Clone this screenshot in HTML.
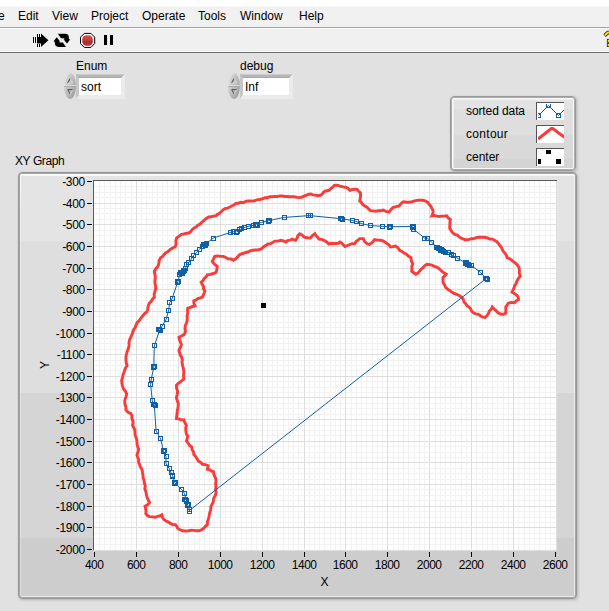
<!DOCTYPE html>
<html><head><meta charset="utf-8"><title>XY Graph</title>
<style>
html,body{margin:0;padding:0;background:#e1e1e1}
body{width:609px;height:611px;overflow:hidden;background:#e1e1e1;position:relative;font-family:"Liberation Sans",sans-serif;font-size:12px;color:#000}
.abs{position:absolute}
.t{position:absolute;white-space:nowrap;line-height:14px}
.tk{font-family:"Liberation Sans",sans-serif;font-size:12px;fill:#000}
#menubar{left:0;top:0;width:609px;height:27px;background:linear-gradient(180deg,#fff 0,#fff 6px,#f1f1f1 7px,#f1f1f1 100%)}
#toolbar{left:0;top:27px;width:609px;height:26px;background:#f0f0f0}
</style></head><body>
<div class="abs" id="menubar"></div>
<div class="abs" id="toolbar"></div>
<div class="abs" style="left:0;top:27px;width:609px;height:1px;background:#a0a0a0"></div>
<div class="abs" style="left:0;top:28px;width:609px;height:1px;background:#fff"></div>
<div class="abs" style="left:0;top:51px;width:609px;height:1px;background:#fff"></div>
<div class="abs" style="left:0;top:52px;width:609px;height:1px;background:#6e6e6e"></div>
<span class="t" style="left:-2px;top:9px">e</span>
<span class="t" style="left:18px;top:9px">Edit</span>
<span class="t" style="left:52px;top:9px">View</span>
<span class="t" style="left:91px;top:9px">Project</span>
<span class="t" style="left:142px;top:9px">Operate</span>
<span class="t" style="left:198px;top:9px">Tools</span>
<span class="t" style="left:240px;top:9px">Window</span>
<span class="t" style="left:299px;top:9px">Help</span>

<!-- toolbar icons -->
<svg class="abs" style="left:0;top:28px" width="609" height="24" viewBox="0 28 609 24">
 <!-- run arrow -->
 <path d="M37 37 H41 V33.6 L48.4 40.3 L41 47 V43.4 H37 Z" fill="#000"/>
 <g shape-rendering="crispEdges" fill="#000"><rect x="33" y="37" width="1" height="6"/><rect x="35" y="37" width="1" height="6"/>
 <rect x="37" y="34" width="1" height="3"/><rect x="39" y="34" width="1" height="3"/><rect x="37" y="44" width="1" height="3"/><rect x="39" y="44" width="1" height="3"/></g>
 <!-- run continuously -->
 <g id="rc"><path d="M57.4 33.8 H65.2 Q68.9 34 68.9 37.6 V39.2 H70.3 L67 43.5 L63.5 39.2 H64.7 Q64.7 38.2 63.4 38.2 H60.5 Z" fill="#000"/></g>
 <use href="#rc" transform="rotate(180 61.85 40.35)"/>
 <path d="M57.4 33.6 L66.4 47" stroke="#f0f0f0" stroke-width="0.8"/>
 <!-- abort -->
 <path d="M84.3 33.4h6.6l3.8 3.8v6.4l-3.8 3.8h-6.6l-3.8 -3.8v-6.4z" fill="#fafafa" stroke="#000" stroke-width="1"/>
 <linearGradient id="rg" x1="0" y1="0" x2="0" y2="1"><stop offset="0" stop-color="#d45050"/><stop offset="0.5" stop-color="#c23a3a"/><stop offset="0.52" stop-color="#b02c2c"/><stop offset="1" stop-color="#b83232"/></linearGradient>
 <rect x="82.2" y="35.2" width="10.6" height="10.6" rx="4.2" fill="url(#rg)"/>
 <!-- pause -->
 <rect x="104" y="35" width="3" height="10" fill="#000"/>
 <rect x="110" y="35" width="3" height="10" fill="#000"/>
 <!-- help ? -->
 <path d="M604.6 35.6 l3.2 -3 h2" fill="none" stroke="#222" stroke-width="3.6"/>
 <path d="M604.9 35.3 l3 -2.8 h2" fill="none" stroke="#f0e800" stroke-width="2"/>
 <rect x="607.3" y="39.3" width="3" height="3.2" fill="#f0e800" stroke="#222" stroke-width="0.8"/>
 <rect x="607.3" y="43.6" width="3" height="3" fill="#f0e800" stroke="#222" stroke-width="0.8"/>
</svg>

<!-- Enum control -->
<span class="t" style="left:76px;top:59px">Enum</span>
<div class="abs box" style="left:76px;top:74px;width:49px;height:25px"><div class="in" ></div></div>
<span class="t" style="left:81px;top:80px">sort</span>
<!-- debug control -->
<span class="t" style="left:240px;top:59px">debug</span>
<div class="abs box" style="left:240px;top:74px;width:53px;height:25px"><div class="in"></div></div>
<span class="t" style="left:245px;top:80px">Inf</span>
<svg class="abs" style="left:0;top:70px" width="300" height="32" viewBox="0 70 300 32">
 <defs>
 <linearGradient id="sg" x1="0" y1="0.100" x2="1" y2="0.900"><stop offset="0" stop-color="#dedede"/><stop offset="0.4" stop-color="#c4c4c4"/><stop offset="1" stop-color="#9a9a9a"/></linearGradient>
 <g id="spin">
  <ellipse cx="6" cy="13" rx="6" ry="13" fill="url(#sg)"/>
  <path d="M6 0.500 C2.400 2.500 0.500 8 0.500 13" fill="none" stroke="#e4e4e4" stroke-width="1"/>
  <rect x="0.200" y="12.100" width="11.600" height="1" fill="#e2e2e2"/>
  <rect x="0.200" y="13.100" width="11.600" height="0.800" fill="#a4a4a4"/>
  <path d="M3.600 10 L6.200 5.600" stroke="#555" stroke-width="1.100"/><path d="M6.200 5.600 L8.600 10 H3.600" fill="none" stroke="#d8d8d8" stroke-width="0.900"/>
  <path d="M3.600 16.600 H8.600" stroke="#555" stroke-width="1.100"/><path d="M3.800 16.800 L6.100 21" stroke="#555" stroke-width="1"/><path d="M8.600 16.800 L6.300 21" fill="none" stroke="#d8d8d8" stroke-width="0.900"/>
 </g></defs>
 <use href="#spin" x="64" y="73"/>
 <use href="#spin" x="228" y="73"/>
</svg>
<style>
.box{background:#fff;border-style:solid;border-width:4px 4px 4px 3px;border-color:#b6b6b6 #ebebeb #ebebeb #c6c6c6;box-sizing:border-box}
.box:before{content:"";position:absolute;left:-2px;right:-3px;top:-4px;height:1px;background:#cacaca}
.box:after{content:"";position:absolute;left:0;right:0;top:-1px;height:1px;background:#a8a8a8}
.box .in{width:100%;height:100%;background:#fff}
</style>

<!-- legend -->
<div class="abs" style="left:450px;top:96px;width:126px;height:75px;border:1px solid #9a9a9a;border-radius:4px;box-sizing:border-box;background:linear-gradient(180deg,#e3e3e3 0,#e3e3e3 12px,#dedede 12px,#dedede 38px,#d9d9d9 38px,#d9d9d9 62px,#d4d4d4 62px);box-shadow:inset 0 0 0 1px #acacac,inset 0 0 0 2px #f8f8f8,inset 1px 1px 0 2px rgba(255,255,255,.45),1px 1px 3px rgba(0,0,0,.2)"></div>
<span class="t" style="left:466px;top:104px;letter-spacing:-0.1px">sorted data</span>
<span class="t" style="left:466px;top:127px;letter-spacing:0.3px">contour</span>
<span class="t" style="left:466px;top:150px">center</span>
<svg class="abs" style="left:530px;top:96px" width="50" height="76" viewBox="530 96 50 76">
 <g shape-rendering="crispEdges">
 <rect x="536" y="102" width="28" height="18" fill="#fff"/><rect x="536" y="102" width="28" height="1" fill="#555"/><rect x="536" y="102" width="1" height="18" fill="#555"/>
 <rect x="536" y="125" width="28" height="18" fill="#fff"/><rect x="536" y="125" width="28" height="1" fill="#555"/><rect x="536" y="125" width="1" height="18" fill="#555"/>
 <rect x="536" y="148" width="28" height="18" fill="#fff"/><rect x="536" y="148" width="28" height="1" fill="#555"/><rect x="536" y="148" width="1" height="18" fill="#555"/>
 <rect x="546" y="150" width="5" height="4" fill="#000"/><rect x="538" y="159" width="3" height="5" fill="#000"/><rect x="556" y="159" width="5" height="5" fill="#000"/>
 </g>
 <clipPath id="c1"><rect x="538" y="104" width="26" height="16"/></clipPath>
 <g clip-path="url(#c1)" fill="none" stroke="#0f5fa6" stroke-width="1">
  <path d="M538.5 115.5 L548.5 105.5 L558.5 115.5 L568.5 105.5"/>
  <rect x="536.5" y="113.5" width="4" height="4"/><rect x="546.5" y="103.500" width="4" height="4"/><rect x="556.5" y="113.5" width="4" height="4"/>
 </g>
 <clipPath id="c2"><rect x="538" y="127" width="26" height="16"/></clipPath>
 <path clip-path="url(#c2)" d="M538 139 L552 128 L565 137.5" fill="none" stroke="#fb3a3a" stroke-width="3"/>
</svg>

<!-- graph -->
<span class="t" style="left:15px;top:154px;letter-spacing:-0.4px">XY Graph</span>
<div class="abs" id="frame" style="left:18px;top:172px;width:559px;height:427px;box-sizing:border-box;border:1px solid #989898;border-radius:4px;background:linear-gradient(180deg,#e4e4e4 0,#e4e4e4 68px,#dedede 68px,#dedede 220px,#d5d5d5 220px,#d5d5d5 365px,#cdcdcd 365px);box-shadow:inset 0 0 0 1px #a4a4a4,inset 0 0 0 2px rgba(255,255,255,.3),1px 1px 3px rgba(0,0,0,.2)"></div>
<div class="abs" style="left:574px;top:177px;width:1px;height:418px;background:rgba(255,255,255,.4)"></div><div class="abs" style="left:22px;top:596px;width:552px;height:1px;background:rgba(255,255,255,.45)"></div>
<div class="abs" style="left:21px;top:174px;width:553px;height:1px;background:#fff"></div><div class="abs" style="left:20px;top:175px;width:555px;height:1px;background:rgba(255,255,255,.55)"></div><div class="abs" style="left:20px;top:176px;width:1px;height:40px;background:linear-gradient(180deg,rgba(255,255,255,.8),rgba(255,255,255,0))"></div>
<svg class="abs" style="left:0;top:0" width="609" height="611" viewBox="0 0 609 611">
<g shape-rendering="crispEdges">
<rect x="94" y="181" width="462" height="369" fill="#fff"/>
<rect x="99" y="181" width="1" height="369" fill="#f2f2f2"/>
<rect x="104" y="181" width="1" height="369" fill="#f2f2f2"/>
<rect x="110" y="181" width="1" height="369" fill="#f2f2f2"/>
<rect x="115" y="181" width="1" height="369" fill="#f2f2f2"/>
<rect x="120" y="181" width="1" height="369" fill="#f2f2f2"/>
<rect x="125" y="181" width="1" height="369" fill="#f2f2f2"/>
<rect x="131" y="181" width="1" height="369" fill="#f2f2f2"/>
<rect x="141" y="181" width="1" height="369" fill="#f2f2f2"/>
<rect x="146" y="181" width="1" height="369" fill="#f2f2f2"/>
<rect x="152" y="181" width="1" height="369" fill="#f2f2f2"/>
<rect x="157" y="181" width="1" height="369" fill="#f2f2f2"/>
<rect x="162" y="181" width="1" height="369" fill="#f2f2f2"/>
<rect x="167" y="181" width="1" height="369" fill="#f2f2f2"/>
<rect x="173" y="181" width="1" height="369" fill="#f2f2f2"/>
<rect x="183" y="181" width="1" height="369" fill="#f2f2f2"/>
<rect x="188" y="181" width="1" height="369" fill="#f2f2f2"/>
<rect x="194" y="181" width="1" height="369" fill="#f2f2f2"/>
<rect x="199" y="181" width="1" height="369" fill="#f2f2f2"/>
<rect x="204" y="181" width="1" height="369" fill="#f2f2f2"/>
<rect x="209" y="181" width="1" height="369" fill="#f2f2f2"/>
<rect x="214" y="181" width="1" height="369" fill="#f2f2f2"/>
<rect x="225" y="181" width="1" height="369" fill="#f2f2f2"/>
<rect x="230" y="181" width="1" height="369" fill="#f2f2f2"/>
<rect x="235" y="181" width="1" height="369" fill="#f2f2f2"/>
<rect x="241" y="181" width="1" height="369" fill="#f2f2f2"/>
<rect x="246" y="181" width="1" height="369" fill="#f2f2f2"/>
<rect x="251" y="181" width="1" height="369" fill="#f2f2f2"/>
<rect x="256" y="181" width="1" height="369" fill="#f2f2f2"/>
<rect x="267" y="181" width="1" height="369" fill="#f2f2f2"/>
<rect x="272" y="181" width="1" height="369" fill="#f2f2f2"/>
<rect x="277" y="181" width="1" height="369" fill="#f2f2f2"/>
<rect x="283" y="181" width="1" height="369" fill="#f2f2f2"/>
<rect x="288" y="181" width="1" height="369" fill="#f2f2f2"/>
<rect x="293" y="181" width="1" height="369" fill="#f2f2f2"/>
<rect x="298" y="181" width="1" height="369" fill="#f2f2f2"/>
<rect x="309" y="181" width="1" height="369" fill="#f2f2f2"/>
<rect x="314" y="181" width="1" height="369" fill="#f2f2f2"/>
<rect x="319" y="181" width="1" height="369" fill="#f2f2f2"/>
<rect x="324" y="181" width="1" height="369" fill="#f2f2f2"/>
<rect x="330" y="181" width="1" height="369" fill="#f2f2f2"/>
<rect x="335" y="181" width="1" height="369" fill="#f2f2f2"/>
<rect x="340" y="181" width="1" height="369" fill="#f2f2f2"/>
<rect x="351" y="181" width="1" height="369" fill="#f2f2f2"/>
<rect x="356" y="181" width="1" height="369" fill="#f2f2f2"/>
<rect x="361" y="181" width="1" height="369" fill="#f2f2f2"/>
<rect x="366" y="181" width="1" height="369" fill="#f2f2f2"/>
<rect x="372" y="181" width="1" height="369" fill="#f2f2f2"/>
<rect x="377" y="181" width="1" height="369" fill="#f2f2f2"/>
<rect x="382" y="181" width="1" height="369" fill="#f2f2f2"/>
<rect x="393" y="181" width="1" height="369" fill="#f2f2f2"/>
<rect x="398" y="181" width="1" height="369" fill="#f2f2f2"/>
<rect x="403" y="181" width="1" height="369" fill="#f2f2f2"/>
<rect x="408" y="181" width="1" height="369" fill="#f2f2f2"/>
<rect x="414" y="181" width="1" height="369" fill="#f2f2f2"/>
<rect x="419" y="181" width="1" height="369" fill="#f2f2f2"/>
<rect x="424" y="181" width="1" height="369" fill="#f2f2f2"/>
<rect x="435" y="181" width="1" height="369" fill="#f2f2f2"/>
<rect x="440" y="181" width="1" height="369" fill="#f2f2f2"/>
<rect x="445" y="181" width="1" height="369" fill="#f2f2f2"/>
<rect x="450" y="181" width="1" height="369" fill="#f2f2f2"/>
<rect x="455" y="181" width="1" height="369" fill="#f2f2f2"/>
<rect x="461" y="181" width="1" height="369" fill="#f2f2f2"/>
<rect x="466" y="181" width="1" height="369" fill="#f2f2f2"/>
<rect x="476" y="181" width="1" height="369" fill="#f2f2f2"/>
<rect x="482" y="181" width="1" height="369" fill="#f2f2f2"/>
<rect x="487" y="181" width="1" height="369" fill="#f2f2f2"/>
<rect x="492" y="181" width="1" height="369" fill="#f2f2f2"/>
<rect x="497" y="181" width="1" height="369" fill="#f2f2f2"/>
<rect x="503" y="181" width="1" height="369" fill="#f2f2f2"/>
<rect x="508" y="181" width="1" height="369" fill="#f2f2f2"/>
<rect x="518" y="181" width="1" height="369" fill="#f2f2f2"/>
<rect x="524" y="181" width="1" height="369" fill="#f2f2f2"/>
<rect x="529" y="181" width="1" height="369" fill="#f2f2f2"/>
<rect x="534" y="181" width="1" height="369" fill="#f2f2f2"/>
<rect x="539" y="181" width="1" height="369" fill="#f2f2f2"/>
<rect x="545" y="181" width="1" height="369" fill="#f2f2f2"/>
<rect x="550" y="181" width="1" height="369" fill="#f2f2f2"/>
<rect x="94" y="186" width="462" height="1" fill="#f2f2f2"/>
<rect x="94" y="192" width="462" height="1" fill="#f2f2f2"/>
<rect x="94" y="197" width="462" height="1" fill="#f2f2f2"/>
<rect x="94" y="208" width="462" height="1" fill="#f2f2f2"/>
<rect x="94" y="213" width="462" height="1" fill="#f2f2f2"/>
<rect x="94" y="219" width="462" height="1" fill="#f2f2f2"/>
<rect x="94" y="230" width="462" height="1" fill="#f2f2f2"/>
<rect x="94" y="235" width="462" height="1" fill="#f2f2f2"/>
<rect x="94" y="241" width="462" height="1" fill="#f2f2f2"/>
<rect x="94" y="251" width="462" height="1" fill="#f2f2f2"/>
<rect x="94" y="257" width="462" height="1" fill="#f2f2f2"/>
<rect x="94" y="262" width="462" height="1" fill="#f2f2f2"/>
<rect x="94" y="273" width="462" height="1" fill="#f2f2f2"/>
<rect x="94" y="278" width="462" height="1" fill="#f2f2f2"/>
<rect x="94" y="284" width="462" height="1" fill="#f2f2f2"/>
<rect x="94" y="295" width="462" height="1" fill="#f2f2f2"/>
<rect x="94" y="300" width="462" height="1" fill="#f2f2f2"/>
<rect x="94" y="305" width="462" height="1" fill="#f2f2f2"/>
<rect x="94" y="316" width="462" height="1" fill="#f2f2f2"/>
<rect x="94" y="322" width="462" height="1" fill="#f2f2f2"/>
<rect x="94" y="327" width="462" height="1" fill="#f2f2f2"/>
<rect x="94" y="338" width="462" height="1" fill="#f2f2f2"/>
<rect x="94" y="343" width="462" height="1" fill="#f2f2f2"/>
<rect x="94" y="349" width="462" height="1" fill="#f2f2f2"/>
<rect x="94" y="360" width="462" height="1" fill="#f2f2f2"/>
<rect x="94" y="365" width="462" height="1" fill="#f2f2f2"/>
<rect x="94" y="370" width="462" height="1" fill="#f2f2f2"/>
<rect x="94" y="381" width="462" height="1" fill="#f2f2f2"/>
<rect x="94" y="387" width="462" height="1" fill="#f2f2f2"/>
<rect x="94" y="392" width="462" height="1" fill="#f2f2f2"/>
<rect x="94" y="403" width="462" height="1" fill="#f2f2f2"/>
<rect x="94" y="408" width="462" height="1" fill="#f2f2f2"/>
<rect x="94" y="414" width="462" height="1" fill="#f2f2f2"/>
<rect x="94" y="425" width="462" height="1" fill="#f2f2f2"/>
<rect x="94" y="430" width="462" height="1" fill="#f2f2f2"/>
<rect x="94" y="435" width="462" height="1" fill="#f2f2f2"/>
<rect x="94" y="446" width="462" height="1" fill="#f2f2f2"/>
<rect x="94" y="452" width="462" height="1" fill="#f2f2f2"/>
<rect x="94" y="457" width="462" height="1" fill="#f2f2f2"/>
<rect x="94" y="468" width="462" height="1" fill="#f2f2f2"/>
<rect x="94" y="473" width="462" height="1" fill="#f2f2f2"/>
<rect x="94" y="479" width="462" height="1" fill="#f2f2f2"/>
<rect x="94" y="489" width="462" height="1" fill="#f2f2f2"/>
<rect x="94" y="495" width="462" height="1" fill="#f2f2f2"/>
<rect x="94" y="500" width="462" height="1" fill="#f2f2f2"/>
<rect x="94" y="511" width="462" height="1" fill="#f2f2f2"/>
<rect x="94" y="517" width="462" height="1" fill="#f2f2f2"/>
<rect x="94" y="522" width="462" height="1" fill="#f2f2f2"/>
<rect x="94" y="533" width="462" height="1" fill="#f2f2f2"/>
<rect x="94" y="538" width="462" height="1" fill="#f2f2f2"/>
<rect x="94" y="544" width="462" height="1" fill="#f2f2f2"/>
<rect x="136" y="181" width="1" height="369" fill="#dedede"/>
<rect x="178" y="181" width="1" height="369" fill="#dedede"/>
<rect x="220" y="181" width="1" height="369" fill="#dedede"/>
<rect x="262" y="181" width="1" height="369" fill="#dedede"/>
<rect x="304" y="181" width="1" height="369" fill="#dedede"/>
<rect x="345" y="181" width="1" height="369" fill="#dedede"/>
<rect x="387" y="181" width="1" height="369" fill="#dedede"/>
<rect x="429" y="181" width="1" height="369" fill="#dedede"/>
<rect x="471" y="181" width="1" height="369" fill="#dedede"/>
<rect x="513" y="181" width="1" height="369" fill="#dedede"/>
<rect x="94" y="203" width="462" height="1" fill="#dedede"/>
<rect x="94" y="224" width="462" height="1" fill="#dedede"/>
<rect x="94" y="246" width="462" height="1" fill="#dedede"/>
<rect x="94" y="268" width="462" height="1" fill="#dedede"/>
<rect x="94" y="289" width="462" height="1" fill="#dedede"/>
<rect x="94" y="311" width="462" height="1" fill="#dedede"/>
<rect x="94" y="333" width="462" height="1" fill="#dedede"/>
<rect x="94" y="354" width="462" height="1" fill="#dedede"/>
<rect x="94" y="376" width="462" height="1" fill="#dedede"/>
<rect x="94" y="397" width="462" height="1" fill="#dedede"/>
<rect x="94" y="419" width="462" height="1" fill="#dedede"/>
<rect x="94" y="441" width="462" height="1" fill="#dedede"/>
<rect x="94" y="462" width="462" height="1" fill="#dedede"/>
<rect x="94" y="484" width="462" height="1" fill="#dedede"/>
<rect x="94" y="506" width="462" height="1" fill="#dedede"/>
<rect x="94" y="527" width="462" height="1" fill="#dedede"/>
<rect x="556" y="181" width="1" height="370" fill="#dedede"/>
<rect x="94" y="550" width="462" height="1" fill="#dedede"/>
<rect x="93" y="180" width="464" height="1" fill="#5a5a5a"/>
<rect x="93" y="180" width="1" height="370" fill="#5a5a5a"/>
<rect x="87" y="181" width="5" height="1" fill="#000"/>
<text x="85" y="185.6" text-anchor="end" class="tk" style="letter-spacing:-0.3px">-300</text>
<rect x="87" y="203" width="5" height="1" fill="#000"/>
<text x="85" y="207.6" text-anchor="end" class="tk" style="letter-spacing:-0.3px">-400</text>
<rect x="87" y="224" width="5" height="1" fill="#000"/>
<text x="85" y="228.6" text-anchor="end" class="tk" style="letter-spacing:-0.3px">-500</text>
<rect x="87" y="246" width="5" height="1" fill="#000"/>
<text x="85" y="250.6" text-anchor="end" class="tk" style="letter-spacing:-0.3px">-600</text>
<rect x="87" y="268" width="5" height="1" fill="#000"/>
<text x="85" y="272.6" text-anchor="end" class="tk" style="letter-spacing:-0.3px">-700</text>
<rect x="87" y="289" width="5" height="1" fill="#000"/>
<text x="85" y="293.6" text-anchor="end" class="tk" style="letter-spacing:-0.3px">-800</text>
<rect x="87" y="311" width="5" height="1" fill="#000"/>
<text x="85" y="315.6" text-anchor="end" class="tk" style="letter-spacing:-0.3px">-900</text>
<rect x="87" y="333" width="5" height="1" fill="#000"/>
<text x="85" y="337.6" text-anchor="end" class="tk" style="letter-spacing:-0.3px">-1000</text>
<rect x="87" y="354" width="5" height="1" fill="#000"/>
<text x="85" y="358.6" text-anchor="end" class="tk" style="letter-spacing:-0.3px">-1100</text>
<rect x="87" y="376" width="5" height="1" fill="#000"/>
<text x="85" y="380.6" text-anchor="end" class="tk" style="letter-spacing:-0.3px">-1200</text>
<rect x="87" y="397" width="5" height="1" fill="#000"/>
<text x="85" y="401.6" text-anchor="end" class="tk" style="letter-spacing:-0.3px">-1300</text>
<rect x="87" y="419" width="5" height="1" fill="#000"/>
<text x="85" y="423.6" text-anchor="end" class="tk" style="letter-spacing:-0.3px">-1400</text>
<rect x="87" y="441" width="5" height="1" fill="#000"/>
<text x="85" y="445.6" text-anchor="end" class="tk" style="letter-spacing:-0.3px">-1500</text>
<rect x="87" y="462" width="5" height="1" fill="#000"/>
<text x="85" y="466.6" text-anchor="end" class="tk" style="letter-spacing:-0.3px">-1600</text>
<rect x="87" y="484" width="5" height="1" fill="#000"/>
<text x="85" y="488.6" text-anchor="end" class="tk" style="letter-spacing:-0.3px">-1700</text>
<rect x="87" y="506" width="5" height="1" fill="#000"/>
<text x="85" y="510.6" text-anchor="end" class="tk" style="letter-spacing:-0.3px">-1800</text>
<rect x="87" y="527" width="5" height="1" fill="#000"/>
<text x="85" y="531.6" text-anchor="end" class="tk" style="letter-spacing:-0.3px">-1900</text>
<rect x="87" y="549" width="5" height="1" fill="#000"/>
<text x="85" y="553.6" text-anchor="end" class="tk" style="letter-spacing:-0.3px">-2000</text>
<rect x="94" y="552" width="1" height="5" fill="#000"/>
<text x="94.2" y="569" text-anchor="middle" class="tk" style="letter-spacing:-0.5px">400</text>
<rect x="136" y="552" width="1" height="5" fill="#000"/>
<text x="136.2" y="569" text-anchor="middle" class="tk" style="letter-spacing:-0.5px">600</text>
<rect x="178" y="552" width="1" height="5" fill="#000"/>
<text x="178.2" y="569" text-anchor="middle" class="tk" style="letter-spacing:-0.5px">800</text>
<rect x="220" y="552" width="1" height="5" fill="#000"/>
<text x="220.2" y="569" text-anchor="middle" class="tk" style="letter-spacing:-0.5px">1000</text>
<rect x="262" y="552" width="1" height="5" fill="#000"/>
<text x="262.2" y="569" text-anchor="middle" class="tk" style="letter-spacing:-0.5px">1200</text>
<rect x="304" y="552" width="1" height="5" fill="#000"/>
<text x="304.2" y="569" text-anchor="middle" class="tk" style="letter-spacing:-0.5px">1400</text>
<rect x="345" y="552" width="1" height="5" fill="#000"/>
<text x="345.2" y="569" text-anchor="middle" class="tk" style="letter-spacing:-0.5px">1600</text>
<rect x="387" y="552" width="1" height="5" fill="#000"/>
<text x="387.2" y="569" text-anchor="middle" class="tk" style="letter-spacing:-0.5px">1800</text>
<rect x="429" y="552" width="1" height="5" fill="#000"/>
<text x="429.2" y="569" text-anchor="middle" class="tk" style="letter-spacing:-0.5px">2000</text>
<rect x="471" y="552" width="1" height="5" fill="#000"/>
<text x="471.2" y="569" text-anchor="middle" class="tk" style="letter-spacing:-0.5px">2200</text>
<rect x="513" y="552" width="1" height="5" fill="#000"/>
<text x="513.2" y="569" text-anchor="middle" class="tk" style="letter-spacing:-0.5px">2400</text>
<rect x="555" y="552" width="1" height="5" fill="#000"/>
<text x="555.2" y="569" text-anchor="middle" class="tk" style="letter-spacing:-0.5px">2600</text>
</g>
<text x="0" y="0" class="tk" transform="translate(48.5 369) rotate(-90)">Y</text>
<text x="324.5" y="586" text-anchor="middle" class="tk">X</text>
<clipPath id="pc"><rect x="94" y="181" width="462" height="369"/></clipPath>
<g clip-path="url(#pc)">
<path d="M132.2 334.0 L132.9 331.8 L133.7 329.5 L135.1 327.6 L135.9 325.4 L137.1 322.6 L139.3 320.5 L140.9 318.0 L142.8 315.8 L144.6 313.5 L147.0 311.8 L147.7 308.8 L148.3 305.7 L149.4 303.2 L151.3 301.4 L152.5 299.0 L154.4 297.1 L154.2 294.3 L154.9 291.5 L155.7 288.8 L155.6 286.0 L155.0 283.6 L154.9 281.1 L155.2 278.6 L155.3 276.1 L154.7 273.7 L154.4 271.2 L155.8 268.7 L157.8 266.6 L158.8 263.8 L159.2 260.6 L160.6 257.7 L162.7 256.5 L164.1 254.4 L165.9 252.7 L168.0 251.5 L170.2 249.5 L172.7 248.0 L175.3 246.6 L176.1 243.8 L175.8 240.8 L176.6 238.0 L179.1 236.2 L181.5 234.3 L184.0 234.0 L186.4 233.3 L188.9 233.0 L190.8 231.5 L192.3 229.5 L194.1 228.0 L196.3 226.9 L197.9 225.1 L200.1 224.0 L201.8 222.2 L203.7 220.7 L206.0 218.7 L208.6 217.0 L211.1 216.7 L213.5 216.1 L216.0 215.8 L217.7 214.1 L219.9 213.0 L221.7 211.3 L223.4 209.6 L225.3 208.5 L227.5 208.1 L229.5 207.2 L231.6 206.0 L233.9 205.1 L235.7 203.5 L238.2 203.3 L240.6 202.3 L243.2 202.7 L245.5 201.7 L247.9 200.9 L250.3 201.0 L252.8 201.1 L255.2 200.5 L257.5 199.6 L260.0 199.5 L262.4 199.0 L264.7 197.7 L267.4 197.7 L269.8 196.7 L272.3 196.8 L274.7 196.4 L277.2 196.6 L279.6 196.0 L282.1 195.9 L284.5 196.5 L287.0 196.5 L289.5 196.7 L292.0 196.7 L294.5 196.8 L296.9 197.4 L299.3 197.6 L301.8 197.2 L303.9 196.2 L306.0 195.4 L308.0 194.3 L310.5 194.0 L312.9 194.9 L315.4 195.1 L317.8 195.7 L320.3 195.3 L322.2 194.2 L323.4 192.2 L325.2 191.0 L329.0 190.3 L330.7 188.6 L332.7 187.2 L334.3 185.4 L337.2 185.2 L340.0 186.2 L343.1 186.8 L346.1 187.4 L348.2 188.5 L349.8 190.3 L352.2 189.5 L354.7 189.2 L357.2 189.4 L358.6 191.3 L360.4 192.8 L360.6 195.5 L360.2 198.2 L359.7 200.9 L361.4 202.5 L362.6 204.5 L364.6 205.9 L367.0 207.1 L368.8 209.1 L370.8 210.8 L373.3 210.9 L375.7 211.3 L378.2 210.8 L380.7 210.8 L383.1 210.0 L386.0 211.4 L389.2 212.0 L390.8 209.6 L392.9 207.6 L396.0 206.7 L399.1 205.9 L400.8 203.9 L402.8 202.2 L403.6 201.7 L406.5 202.2 L409.3 202.2 L412.2 201.7 L414.6 200.8 L417.1 200.4 L419.6 200.3 L422.7 200.3 L425.8 201.0 L427.7 202.4 L429.1 204.3 L430.7 205.9 L431.9 208.4 L433.2 210.9 L432.8 213.4 L431.9 215.8 L434.4 215.4 L436.8 216.2 L439.3 216.5 L441.8 216.1 L444.2 216.1 L446.7 215.8 L448.2 218.0 L450.4 219.5 L449.9 222.3 L449.9 225.2 L449.7 228.1 L451.2 230.6 L452.9 233.0 L454.8 234.4 L457.2 235.0 L459.0 236.7 L460.9 238.1 L463.0 239.0 L465.2 239.7 L468.4 239.6 L471.4 238.7 L473.9 238.6 L476.2 237.6 L478.7 237.2 L481.6 237.3 L484.5 237.3 L487.4 238.0 L489.8 239.0 L492.5 239.1 L494.8 240.4 L496.8 241.7 L498.3 243.4 L499.7 245.3 L501.3 247.2 L502.3 249.3 L503.4 251.5 L505.1 253.3 L506.4 255.3 L507.1 257.7 L509.4 258.6 L511.4 259.8 L513.2 261.4 L515.4 263.1 L517.4 265.0 L518.9 267.3 L519.4 270.0 L519.3 273.1 L520.1 276.1 L518.4 278.5 L516.9 281.1 L516.1 283.7 L514.5 286.0 L513.9 288.1 L513.0 290.1 L512.0 292.1 L514.5 293.6 L516.9 295.3 L518.2 297.2 L518.6 299.5 L516.3 300.8 L514.5 302.7 L511.4 302.4 L508.3 303.2 L507.1 305.1 L505.8 306.9 L505.8 310.0 L505.8 313.1 L503.5 314.2 L500.9 314.3 L498.2 312.8 L496.0 310.6 L494.0 308.9 L492.3 306.9 L491.3 309.1 L489.5 310.8 L488.6 313.1 L487.1 315.6 L484.9 317.5 L482.2 317.0 L480.0 315.5 L478.1 314.2 L475.9 313.9 L473.8 313.1 L471.8 311.3 L470.6 308.9 L468.9 306.9 L466.9 305.7 L465.7 303.6 L464.0 302.0 L463.3 299.3 L461.5 297.1 L459.2 295.5 L456.7 294.4 L454.1 293.4 L451.8 292.1 L449.7 290.4 L447.4 289.1 L445.5 287.2 L444.5 284.6 L443.0 282.3 L443.0 279.9 L443.0 277.4 L444.8 276.0 L446.2 274.2 L444.2 273.0 L442.3 271.7 L440.6 270.0 L438.7 268.4 L436.8 267.0 L434.4 266.3 L432.0 265.2 L429.6 264.6 L427.0 264.3 L424.9 265.6 L423.3 267.5 L421.2 269.1 L419.6 271.2 L418.0 273.0 L415.9 274.2 L413.8 272.7 L411.7 271.2 L411.9 268.7 L411.8 266.2 L412.7 263.8 L411.3 260.9 L411.0 257.7 L408.4 256.1 L406.1 254.0 L403.9 253.1 L402.1 251.5 L399.9 250.5 L398.0 247.9 L395.4 246.0 L393.0 246.6 L390.5 247.0 L389.0 244.9 L386.8 243.5 L385.0 241.9 L382.9 240.9 L380.6 240.3 L377.5 240.1 L374.5 239.6 L373.1 241.5 L371.4 243.1 L369.5 244.5 L367.5 244.0 L365.8 242.8 L364.3 240.9 L363.4 238.6 L359.7 238.6 L358.0 240.1 L356.1 241.5 L354.8 243.5 L352.2 243.6 L349.8 244.5 L347.4 245.5 L344.9 246.5 L343.4 244.9 L341.9 243.3 L340.0 242.1 L338.3 243.3 L336.3 243.5 L333.8 243.5 L331.3 243.3 L328.9 244.0 L326.7 241.9 L324.0 240.3 L321.6 239.4 L319.0 239.1 L317.6 237.3 L316.0 235.7 L314.9 233.7 L312.4 235.5 L310.4 237.9 L307.3 237.7 L304.3 237.1 L302.3 235.1 L299.8 233.7 L297.9 235.6 L297.1 238.2 L295.6 240.3 L292.0 239.1 L290.0 240.2 L287.6 240.6 L285.8 242.1 L283.4 240.9 L280.9 240.3 L277.9 241.1 L274.7 241.1 L272.7 242.6 L270.6 243.6 L268.0 243.8 L266.1 245.3 L263.4 246.9 L261.2 249.0 L258.3 249.9 L255.2 250.0 L252.7 250.3 L250.2 250.8 L248.0 252.0 L245.5 252.5 L243.1 253.5 L240.6 254.0 L238.7 255.5 L237.2 257.4 L235.5 259.0 L233.3 260.1 L230.9 259.0 L228.3 258.9 L225.9 257.5 L223.4 256.4 L220.5 256.4 L217.7 255.9 L214.8 256.4 L213.6 258.9 L212.3 261.4 L213.6 263.3 L215.3 264.9 L217.2 266.3 L216.9 269.4 L216.0 272.4 L213.2 273.5 L210.3 274.3 L207.4 274.9 L206.1 276.9 L204.2 278.5 L203.0 280.6 L201.2 282.3 L202.2 284.4 L203.5 286.4 L203.5 288.9 L204.9 290.9 L204.2 293.0 L203.3 295.1 L202.4 297.1 L200.2 297.9 L197.9 298.5 L196.0 300.0 L193.8 300.8 L193.9 303.4 L195.0 305.7 L192.6 306.5 L190.1 307.3 L187.7 308.2 L187.5 310.6 L187.8 313.2 L187.1 315.6 L187.2 318.0 L187.2 320.5 L186.4 322.9 L185.4 325.6 L185.0 328.5 L185.4 330.8 L185.0 333.0 L183.8 334.8 L181.4 336.0 L178.9 337.2 L179.5 339.8 L180.5 342.2 L181.4 344.6 L180.8 346.7 L179.7 348.7 L178.9 350.8 L179.7 352.9 L180.3 355.0 L181.4 356.9 L182.3 359.7 L182.1 362.7 L182.6 365.6 L183.3 368.0 L183.7 370.5 L183.8 373.0 L183.5 376.1 L183.8 379.1 L181.9 380.6 L180.1 382.1 L178.0 383.5 L176.4 385.3 L176.6 388.5 L177.7 391.4 L177.1 394.5 L176.4 397.6 L177.3 400.7 L178.4 403.7 L178.1 406.2 L177.7 408.6 L177.2 411.1 L177.1 413.6 L176.7 416.0 L176.4 418.5 L178.9 418.9 L181.2 419.9 L183.8 419.8 L184.9 422.7 L186.4 425.4 L185.7 428.2 L185.9 431.1 L186.3 433.7 L187.7 436.0 L187.3 438.5 L186.4 440.9 L188.1 443.0 L189.6 445.4 L191.8 447.1 L192.1 449.7 L193.6 451.9 L193.8 454.5 L195.8 456.5 L197.1 459.1 L198.7 461.4 L200.9 462.4 L202.4 464.3 L205.3 464.6 L208.1 465.6 L207.4 469.3 L209.6 469.6 L211.4 471.1 L213.5 471.7 L213.8 473.9 L214.4 476.0 L215.5 477.9 L216.1 480.7 L215.6 483.6 L216.0 486.5 L215.6 489.4 L216.1 492.3 L215.5 495.1 L214.3 497.1 L213.4 499.2 L213.4 501.7 L212.3 503.7 L210.9 506.5 L210.8 509.5 L209.8 512.4 L209.2 515.5 L208.6 518.5 L207.4 521.5 L207.4 524.7 L205.3 526.3 L203.7 528.4 L201.4 530.0 L198.7 530.8 L196.3 530.7 L193.8 530.4 L191.4 530.3 L188.5 530.7 L185.6 531.0 L182.7 530.8 L180.2 529.8 L177.8 528.4 L176.8 526.4 L175.3 524.7 L172.7 524.6 L170.4 523.4 L168.4 522.1 L166.3 521.1 L164.3 519.8 L162.5 517.6 L161.8 514.8 L159.8 515.8 L157.6 516.3 L155.6 517.3 L152.6 516.9 L149.5 516.6 L147.3 515.5 L145.8 513.6 L146.1 511.1 L145.6 508.6 L145.0 506.2 L147.6 504.8 L149.5 502.5 L148.3 500.0 L147.0 497.3 L146.4 494.3 L145.8 491.4 L144.8 488.7 L145.3 485.8 L144.3 483.1 L144.1 480.3 L143.2 478.0 L143.0 475.5 L142.6 473.0 L142.3 470.7 L141.5 468.5 L140.1 466.6 L139.6 464.3 L138.5 462.1 L138.7 459.5 L137.7 457.3 L136.9 455.0 L138.0 452.1 L138.7 449.0 L137.7 446.8 L137.1 444.5 L137.0 442.0 L136.7 439.5 L135.9 437.0 L135.0 434.6 L135.0 432.0 L134.7 429.5 L133.5 427.3 L132.5 425.0 L133.1 423.0 L133.0 421.0 L131.8 418.7 L132.0 415.9 L130.9 413.6 L128.1 412.2 L125.9 409.9 L125.9 407.0 L125.0 404.2 L124.7 401.3 L125.2 398.8 L126.1 396.4 L126.7 393.9 L125.5 391.2 L123.5 389.0 L122.6 386.2 L121.9 383.3 L121.7 380.3 L122.6 377.4 L123.1 374.5 L124.2 371.7 L124.8 369.5 L125.8 367.5 L127.2 365.6 L126.2 362.8 L126.0 359.9 L125.9 356.9 L126.5 354.0 L127.3 351.1 L128.4 348.3 L129.1 345.5 L129.0 342.5 L129.6 339.7 L130.9 336.9 L132.2 334.0 Z" fill="none" stroke="#fb3a3a" stroke-width="2.9" stroke-linejoin="miter"/>
<path d="M189.4 511.6 L189.4 509.2 L187.7 505.0 L186.9 501.3 L185.9 499.3 L184.5 493.4 L181.5 489.5 L174.9 482.8 L173.0 477.0 L172.4 475.4 L171.2 473.0 L169.2 468.5 L166.0 463.6 L166.0 456.5 L163.3 450.8 L160.6 438.5 L156.1 431.1 L154.3 405.0 L152.3 400.8 L150.6 384.5 L151.3 379.1 L153.8 366.8 L154.3 345.9 L159.7 329.9 L162.1 326.2 L166.2 319.2 L168.7 310.1 L169.7 302.7 L172.1 298.8 L177.8 281.6 L179.5 274.9 L181.5 272.4 L183.5 270.7 L185.2 268.7 L186.9 265.0 L188.9 262.6 L191.4 258.9 L193.8 255.2 L196.3 252.7 L199.2 249.5 L202.4 246.1 L204.2 244.1 L206.1 243.6 L213.5 238.0 L230.8 232.3 L233.2 231.8 L236.2 231.1 L239.4 229.8 L241.8 228.8 L244.8 227.4 L248.0 226.4 L253.4 225.3 L256.6 224.0 L261.5 222.4 L268.5 220.6 L284.1 217.4 L308.0 215.7 L310.4 215.7 L341.7 218.7 L352.8 220.6 L356.0 221.4 L361.4 223.6 L370.3 225.6 L382.3 226.3 L389.2 226.8 L412.2 226.4 L413.5 229.3 L424.6 238.0 L427.5 238.0 L431.5 242.1 L437.4 247.8 L439.3 248.6 L440.6 249.5 L443.0 251.0 L445.5 252.0 L448.0 252.0 L451.2 254.5 L453.6 255.9 L457.8 258.4 L465.2 262.6 L466.9 263.8 L468.9 265.0 L471.8 265.8 L480.5 272.4 L486.1 278.6 L189.4 510.5" fill="none" stroke="#0f5fa6" stroke-width="1"/>
<g fill="none" stroke="#0f5fa6" stroke-width="1" shape-rendering="crispEdges">
<rect x="187.5" y="509.5" width="4" height="4"/>
<rect x="187.5" y="507.5" width="4" height="4"/>
<rect x="185.5" y="502.5" width="4" height="4"/>
<rect x="184.5" y="499.5" width="4" height="4"/>
<rect x="183.5" y="497.5" width="4" height="4"/>
<rect x="182.5" y="491.5" width="4" height="4"/>
<rect x="179.5" y="487.5" width="4" height="4"/>
<rect x="172.5" y="480.5" width="4" height="4"/>
<rect x="170.5" y="474.5" width="4" height="4"/>
<rect x="170.5" y="473.5" width="4" height="4"/>
<rect x="169.5" y="470.5" width="4" height="4"/>
<rect x="167.5" y="466.5" width="4" height="4"/>
<rect x="164.5" y="461.5" width="4" height="4"/>
<rect x="164.5" y="454.5" width="4" height="4"/>
<rect x="161.5" y="448.5" width="4" height="4"/>
<rect x="158.5" y="436.5" width="4" height="4"/>
<rect x="154.5" y="429.5" width="4" height="4"/>
<rect x="152.5" y="402.5" width="4" height="4"/>
<rect x="150.5" y="398.5" width="4" height="4"/>
<rect x="148.5" y="382.5" width="4" height="4"/>
<rect x="149.5" y="377.5" width="4" height="4"/>
<rect x="151.5" y="364.5" width="4" height="4"/>
<rect x="152.5" y="343.5" width="4" height="4"/>
<rect x="157.5" y="327.5" width="4" height="4"/>
<rect x="160.5" y="324.5" width="4" height="4"/>
<rect x="164.5" y="317.5" width="4" height="4"/>
<rect x="166.5" y="308.5" width="4" height="4"/>
<rect x="167.5" y="300.5" width="4" height="4"/>
<rect x="170.5" y="296.5" width="4" height="4"/>
<rect x="175.5" y="279.5" width="4" height="4"/>
<rect x="177.5" y="272.5" width="4" height="4"/>
<rect x="179.5" y="270.5" width="4" height="4"/>
<rect x="181.5" y="268.5" width="4" height="4"/>
<rect x="183.5" y="266.5" width="4" height="4"/>
<rect x="184.5" y="262.5" width="4" height="4"/>
<rect x="186.5" y="260.5" width="4" height="4"/>
<rect x="189.5" y="256.5" width="4" height="4"/>
<rect x="191.5" y="253.5" width="4" height="4"/>
<rect x="194.5" y="250.5" width="4" height="4"/>
<rect x="197.5" y="247.5" width="4" height="4"/>
<rect x="200.5" y="244.5" width="4" height="4"/>
<rect x="202.5" y="242.5" width="4" height="4"/>
<rect x="204.5" y="241.5" width="4" height="4"/>
<rect x="211.5" y="236.5" width="4" height="4"/>
<rect x="228.5" y="230.5" width="4" height="4"/>
<rect x="231.5" y="229.5" width="4" height="4"/>
<rect x="234.5" y="229.5" width="4" height="4"/>
<rect x="237.5" y="227.5" width="4" height="4"/>
<rect x="239.5" y="226.5" width="4" height="4"/>
<rect x="242.5" y="225.5" width="4" height="4"/>
<rect x="246.5" y="224.5" width="4" height="4"/>
<rect x="251.5" y="223.5" width="4" height="4"/>
<rect x="254.5" y="222.5" width="4" height="4"/>
<rect x="259.5" y="220.5" width="4" height="4"/>
<rect x="266.5" y="218.5" width="4" height="4"/>
<rect x="282.5" y="215.5" width="4" height="4"/>
<rect x="306.5" y="213.5" width="4" height="4"/>
<rect x="308.5" y="213.5" width="4" height="4"/>
<rect x="339.5" y="216.5" width="4" height="4"/>
<rect x="350.5" y="218.5" width="4" height="4"/>
<rect x="354.5" y="219.5" width="4" height="4"/>
<rect x="359.5" y="221.5" width="4" height="4"/>
<rect x="368.5" y="223.5" width="4" height="4"/>
<rect x="380.5" y="224.5" width="4" height="4"/>
<rect x="387.5" y="224.5" width="4" height="4"/>
<rect x="410.5" y="224.5" width="4" height="4"/>
<rect x="411.5" y="227.5" width="4" height="4"/>
<rect x="422.5" y="236.5" width="4" height="4"/>
<rect x="425.5" y="236.5" width="4" height="4"/>
<rect x="429.5" y="240.5" width="4" height="4"/>
<rect x="435.5" y="245.5" width="4" height="4"/>
<rect x="437.5" y="246.5" width="4" height="4"/>
<rect x="438.5" y="247.5" width="4" height="4"/>
<rect x="440.5" y="248.5" width="4" height="4"/>
<rect x="443.5" y="250.5" width="4" height="4"/>
<rect x="446.5" y="250.5" width="4" height="4"/>
<rect x="449.5" y="252.5" width="4" height="4"/>
<rect x="451.5" y="253.5" width="4" height="4"/>
<rect x="455.5" y="256.5" width="4" height="4"/>
<rect x="463.5" y="260.5" width="4" height="4"/>
<rect x="464.5" y="261.5" width="4" height="4"/>
<rect x="466.5" y="262.5" width="4" height="4"/>
<rect x="469.5" y="263.5" width="4" height="4"/>
<rect x="478.5" y="270.5" width="4" height="4"/>
<rect x="484.5" y="276.5" width="4" height="4"/>
<rect x="152.5" y="364.5" width="4" height="4"/>
<rect x="151.5" y="365.5" width="4" height="4"/>
<rect x="158.5" y="328.5" width="4" height="4"/>
<rect x="156.5" y="327.5" width="4" height="4"/>
<rect x="176.5" y="279.5" width="4" height="4"/>
<rect x="175.5" y="280.5" width="4" height="4"/>
<rect x="180.5" y="271.5" width="4" height="4"/>
<rect x="178.5" y="270.5" width="4" height="4"/>
<rect x="182.5" y="268.5" width="4" height="4"/>
<rect x="181.5" y="269.5" width="4" height="4"/>
<rect x="203.5" y="243.5" width="4" height="4"/>
<rect x="201.5" y="242.5" width="4" height="4"/>
<rect x="267.5" y="218.5" width="4" height="4"/>
<rect x="266.5" y="219.5" width="4" height="4"/>
<rect x="340.5" y="217.5" width="4" height="4"/>
<rect x="338.5" y="216.5" width="4" height="4"/>
<rect x="388.5" y="224.5" width="4" height="4"/>
<rect x="387.5" y="225.5" width="4" height="4"/>
<rect x="153.5" y="403.5" width="4" height="4"/>
<rect x="151.5" y="402.5" width="4" height="4"/>
<rect x="173.5" y="480.5" width="4" height="4"/>
<rect x="172.5" y="481.5" width="4" height="4"/>
<rect x="184.5" y="498.5" width="4" height="4"/>
<rect x="182.5" y="497.5" width="4" height="4"/>
<rect x="186.5" y="502.5" width="4" height="4"/>
<rect x="185.5" y="503.5" width="4" height="4"/>
<rect x="436.5" y="246.5" width="4" height="4"/>
<rect x="434.5" y="245.5" width="4" height="4"/>
<rect x="439.5" y="247.5" width="4" height="4"/>
<rect x="438.5" y="248.5" width="4" height="4"/>
<rect x="441.5" y="249.5" width="4" height="4"/>
<rect x="439.5" y="248.5" width="4" height="4"/>
<rect x="464.5" y="260.5" width="4" height="4"/>
<rect x="463.5" y="261.5" width="4" height="4"/>
<rect x="467.5" y="263.5" width="4" height="4"/>
<rect x="465.5" y="262.5" width="4" height="4"/>
<rect x="411.5" y="224.5" width="4" height="4"/>
<rect x="410.5" y="225.5" width="4" height="4"/>
<rect x="485.5" y="277.5" width="4" height="4"/>
<rect x="483.5" y="276.5" width="4" height="4"/>
<rect x="162.5" y="448.5" width="4" height="4"/>
<rect x="161.5" y="449.5" width="4" height="4"/>
<rect x="255.5" y="223.5" width="4" height="4"/>
<rect x="253.5" y="222.5" width="4" height="4"/>
<rect x="235.5" y="229.5" width="4" height="4"/>
<rect x="234.5" y="230.5" width="4" height="4"/>
</g>
<rect x="261" y="303" width="5" height="5" fill="#000"/>
</g>
</svg>
</body></html>
